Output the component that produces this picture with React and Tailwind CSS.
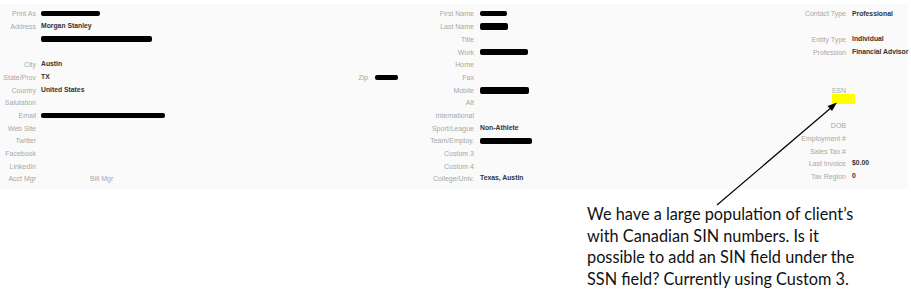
const Blot = ({ w, h = 6, dy = 0 }) => (
  <div
    className="bg-black rounded-[2px]"
    style={{ width: w, height: h, marginTop: dy }}
  />
);

function Row({ label, labelW, gap = 5, children }) {
  return (
    <div className="flex items-center h-[12.7px] whitespace-nowrap">
      <div className="text-right text-[#a8a8a8] text-[7px] leading-none shrink-0" style={{ width: labelW }}>
        {label}
      </div>
      <div className="flex items-center text-[6.8px] font-bold text-[#333] leading-none whitespace-nowrap" style={{ marginLeft: gap }}>
        {children}
      </div>
    </div>
  );
}

const Val = ({ children }) => <span>{children}</span>;

export default function App() {
  const left = [
    ["Print As", <Blot w={59} h={5} />],
    ["Address", <Val>Morgan Stanley</Val>],
    ["", <Blot w={111} h={6} />],
    ["", null],
    ["City", <Val>Austin</Val>],
    [
      "State/Prov",
      <>
        <div className="w-[310px]">TX</div>
        <div className="w-[17px] text-right font-normal text-[7px] text-[#a8a8a8]">Zip</div>
        <div className="ml-[7px]">
          <Blot w={23} h={5} />
        </div>
      </>,
    ],
    ["Country", <Val>United States</Val>],
    ["Salutation", null],
    ["Email", <Blot w={124} h={5} />],
    ["Web Site", null],
    ["Twitter", null],
    ["Facebook", null],
    ["LinkedIn", null],
    [
      "Acct Mgr",
      <>
        <div className="w-[49px]" />
        <div className="font-normal text-[7px] text-[#a8a8a8]">Bill Mgr</div>
      </>,
    ],
  ];

  const mid = [
    ["First Name", <Blot w={27} h={5} />],
    ["Last Name", <Blot w={28} h={7} />],
    ["Title", null],
    ["Work", <Blot w={48} h={6} />],
    ["Home", null],
    ["Fax", null],
    ["Mobile", <Blot w={49} h={7} />],
    ["Alt", null],
    ["International", null],
    ["Sport/League", <Val>Non-Athlete</Val>],
    ["Team/Employ.", <Blot w={52} h={6} />],
    ["Custom 3", null],
    ["Custom 4", null],
    ["College/Univ.", <Val>Texas, Austin</Val>],
  ];

  const right = [
    ["Contact Type", <Val>Professional</Val>],
    ["", null],
    ["Entity Type", <Val>Individual</Val>],
    ["Profession", <Val>Financial Advisor</Val>],
    ["", null],
    ["", null],
    ["SSN", null],
    ["__yellow", null],
    ["", null],
    ["DOB", null],
    ["Employment #", null],
    ["Sales Tax #", null],
    ["Last Invoice", <Val>$0.00</Val>],
    ["Tax Region", <Val>0</Val>],
  ];

  return (
    <div
      className="relative w-[911px] h-[297px] bg-white overflow-hidden"
      style={{ fontFamily: '"Liberation Sans", Arial, sans-serif' }}
    >
      <div className="mt-[4px] mr-[3px] h-[185px] bg-[#fafafa] pt-[3.6px] flex">
        <div className="w-[420px]">
          {left.map(([l, v], i) => (
            <Row key={i} label={l} labelW={36} gap={5}>
              {v}
            </Row>
          ))}
        </div>
        <div className="w-[370px]">
          {mid.map(([l, v], i) => (
            <Row key={i} label={l} labelW={54} gap={6}>
              {v}
            </Row>
          ))}
        </div>
        <div className="flex-1 min-w-0">
          {right.map(([l, v], i) =>
            l === "__yellow" ? (
              <div key={i} className="h-[12.7px]">
                <div className="ml-[42px] w-[23px] h-[10px] bg-[#ffff00] -mt-[2.5px]" />
              </div>
            ) : (
              <Row key={i} label={l} labelW={56} gap={6}>
                {v}
              </Row>
            )
          )}
        </div>
      </div>

      <div
        className="ml-[587px] mt-[14px] text-[16.3px] leading-[21.7px] text-[#111]"
        style={{ fontFamily: 'Lato, "Open Sans", sans-serif' }}
      >
        We have a large population of client’s
        <br />
        with Canadian SIN numbers. Is it
        <br />
        possible to add an SIN field under the
        <br />
        SSN field? Currently using Custom 3.
      </div>

      <svg className="absolute inset-0 pointer-events-none" width="911" height="297">
        <line x1="717" y1="205" x2="832" y2="107" stroke="#000" strokeWidth="1.2" />
        <polygon points="837,102.5 827.5,106 832,111" fill="#000" />
      </svg>
    </div>
  );
}
